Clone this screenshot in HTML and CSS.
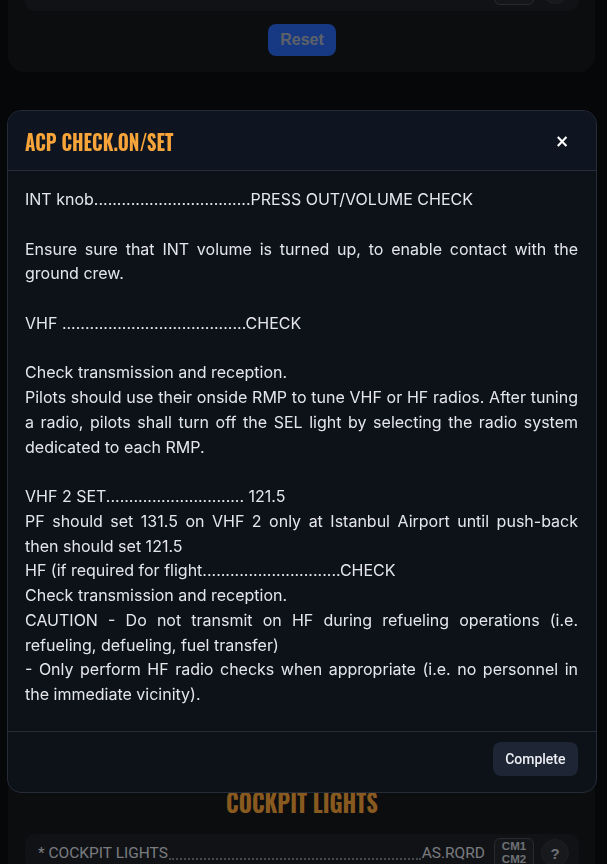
FILE: index.html
```html
<!DOCTYPE html>
<html lang="en">
<head>
<meta charset="utf-8">
<title>ACP CHECK.ON/SET</title>
<link rel="stylesheet" href="styles.css">
</head>
<body>
<div class="page">
  <section class="card card-top">
    <div class="item item-tall">
      <span class="item-label">* ACP</span>
      <span class="leader"></span>
      <span class="item-value">CHECK.ON/SET</span>
      <span class="badge">CM1<br>CM2</span>
      <span class="help">?</span>
    </div>
    <div class="actions">
      <button class="reset">Reset</button>
    </div>
  </section>

  <section class="card card-lights">
    <h2 class="section-title">COCKPIT LIGHTS</h2>
    <div class="item">
      <span class="item-label">* COCKPIT LIGHTS</span>
      <span class="leader"></span>
      <span class="item-value">AS.RQRD</span>
      <span class="badge">CM1<br>CM2</span>
      <span class="help">?</span>
    </div>
  </section>
</div>

<div class="overlay"></div>

<div class="modal">
  <div class="modal-header">
    <h1 class="modal-title">ACP CHECK.ON/SET</h1>
    <button class="close">&#215;</button>
  </div>
  <div class="modal-body">INT knob..................................PRESS OUT/VOLUME CHECK

Ensure sure that INT volume is turned up, to enable contact with the ground crew.

VHF ........................................CHECK

Check transmission and reception.
Pilots should use their onside RMP to tune VHF or HF radios. After tuning a radio, pilots shall turn off the SEL light by selecting the radio system dedicated to each RMP.

VHF 2 SET.............................. 121.5
PF should set 131.5 on VHF 2 only at Istanbul Airport until push-back then should set 121.5
HF (if required for flight..............................CHECK
Check transmission and reception.
CAUTION - Do not transmit on HF during refueling operations (i.e. refueling, defueling, fuel transfer)
- Only perform HF radio checks when appropriate (i.e. no personnel in the immediate vicinity).</div>
  <div class="modal-footer">
    <button class="complete">Complete</button>
  </div>
</div>
</body>
</html>
```

FILE: styles.css
```css
* { box-sizing: border-box; }

html, body {
  margin: 0;
  padding: 0;
  height: 100%;
  overflow: hidden;
}

body {
  background: #0b0d10;
  font-family: Roboto, "Liberation Sans", sans-serif;
  color: #e5e7eb;
}

.page {
  padding: 0 12px 0 8px;
  margin-top: -48px;
  display: flex;
  flex-direction: column;
}

.card {
  background: #16181d;
  border-radius: 16px;
  padding: 17px 16px 16px 17px;
}

.card-lights {
  margin-top: 700px;
  padding-top: 13px;
}

.item {
  display: flex;
  align-items: center;
  height: 38px;
  padding: 0 10px 0 13px;
  background: #202228;
  border-radius: 10px;
  font-size: 15.5px;
  color: #dcdfe4;
}

.item-tall { height: 42px; }

.item-label { white-space: nowrap; }

.leader {
  flex: 1;
  align-self: flex-end;
  margin: 0 1px 12px 1px;
  border-bottom: 2px dotted #7d838c;
}

.item-value { white-space: nowrap; }

.badge {
  margin-left: 9px;
  width: 40px;
  height: 30px;
  border: 1px solid #4a4e57;
  border-radius: 6px;
  font-family: "Liberation Sans", Arial, sans-serif;
  font-weight: 700;
  font-size: 11.5px;
  line-height: 13px;
  text-align: center;
  display: flex;
  align-items: center;
  justify-content: center;
  color: #c9ced6;
  background: #262930;
}

.help {
  margin-left: 7px;
  width: 28px;
  height: 28px;
  border-radius: 50%;
  background: #2b2e35;
  border: 1px solid #34373e;
  color: #c9ced6;
  font-family: "Liberation Sans", Arial, sans-serif;
  font-weight: 700;
  font-size: 15px;
  display: flex;
  align-items: center;
  justify-content: center;
}

.actions {
  display: flex;
  justify-content: center;
  margin-top: 13px;
}

.reset {
  height: 32px;
  padding: 0 12px;
  border: none;
  border-radius: 8px;
  background: #2a68ee;
  color: #aab2c0;
  font-family: "Liberation Sans", Arial, sans-serif;
  font-weight: 700;
  font-size: 16px;
}

.section-title {
  margin: 0 0 15px;
  text-align: center;
  font-family: "Oswald", "Liberation Sans Narrow", "DejaVu Sans Condensed", sans-serif;
  font-weight: 700;
  font-size: 25px;
  line-height: 34px;
  color: #f9a53a;
  transform: scaleX(0.9);
  transform-origin: center;
}

.overlay {
  position: fixed;
  inset: 0;
  background: rgba(0, 0, 0, 0.45);
}

.modal {
  position: fixed;
  top: 110px;
  left: 7px;
  width: 590px;
  background: #0d1118;
  border: 1px solid #252c37;
  border-radius: 14px;
  overflow: hidden;
}

.modal-header {
  height: 60px;
  display: flex;
  align-items: center;
  justify-content: space-between;
  padding: 0 24px 0 17px;
  background: #0f1520;
  border-bottom: 1px solid #252c37;
}

.modal-title {
  margin: 0;
  font-family: "Oswald", "Liberation Sans Narrow", "DejaVu Sans Condensed", sans-serif;
  font-weight: 700;
  font-size: 22.5px;
  color: #f7a53a;
  transform: scaleX(0.84);
  transform-origin: left center;
}

.close {
  width: 20px;
  height: 20px;
  padding: 0;
  border: none;
  background: transparent;
  color: #ffffff;
  font-family: "DejaVu Sans", sans-serif;
  font-weight: 700;
  font-size: 17px;
  line-height: 20px;
}

.modal-body {
  padding: 16px 18px 24px 17px;
  white-space: pre-line;
  text-align: justify;
  font-family: Inter, Roboto, sans-serif;
  font-size: 16px;
  line-height: 24.75px;
  color: #e4e6ea;
}

.modal-footer {
  display: flex;
  justify-content: flex-end;
  padding: 10px 18px 16px;
  border-top: 1px solid #252c37;
}

.complete {
  height: 34px;
  padding: 0 12.5px;
  border: none;
  border-radius: 8px;
  background: #1e2636;
  color: #eceef2;
  font-family: Roboto, "Liberation Sans", sans-serif;
  font-weight: 500;
  font-size: 14px;
}
```
